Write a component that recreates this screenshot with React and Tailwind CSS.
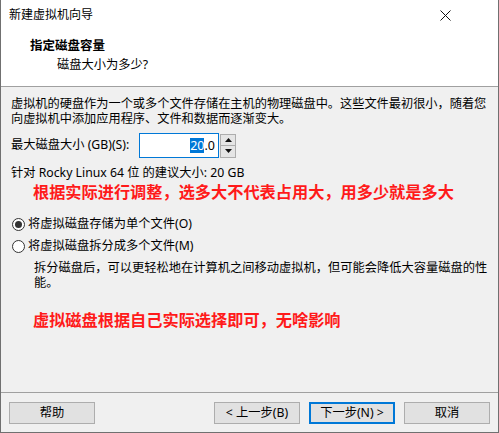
import React, { useState } from 'react';

const font = { fontFamily: '"Noto Sans", "Noto Sans CJK SC", sans-serif' };

function Radio({ checked, label, onClick }) {
  return (
    <div className="flex items-center h-[16px] cursor-default" onClick={onClick}>
      <span className="w-[13px] h-[13px] rounded-full border border-[#333] bg-white flex items-center justify-center ml-[1px] mr-[3px]">
        {checked && <span className="w-[7px] h-[7px] rounded-full bg-[#333]"></span>}
      </span>
      <span className="text-[12.25px] leading-[16px] whitespace-nowrap">{label}</span>
    </div>
  );
}

function Btn({ children, primary }) {
  return (
    <button
      className={`w-[86px] h-[22px] bg-[#e1e1e1] text-[12.25px] leading-[18px] text-black ${
        primary ? 'border-2 border-[#0078d7]' : 'border border-[#adadad]'
      }`}
    >
      {children}
    </button>
  );
}

export default function App() {
  const [split, setSplit] = useState(false);

  return (
    <div className="w-[499px] h-[433px] flex flex-col bg-[#f0f0f0] border-l border-r border-b border-[#707070] text-black overflow-hidden" style={font}>
      {/* 标题栏 */}
      <div className="h-[30px] bg-white flex items-center justify-between pl-[8px] pr-[47px]">
        <span className="text-[12px] leading-[16px]">新建虚拟机向导</span>
        <svg width="11" height="11" viewBox="0 0 11 11">
          <path d="M0.5 0.5 L10.5 10.5 M10.5 0.5 L0.5 10.5" stroke="#111" strokeWidth="1" />
        </svg>
      </div>

      {/* 页头 */}
      <div className="h-[57px] bg-white border-b border-[#a0a0a0] pl-[29px] pt-[8px]">
        <div className="text-[12.5px] font-bold leading-[16px]">指定磁盘容量</div>
        <div className="text-[12.25px] leading-[16px] ml-[27px] mt-[3px]">磁盘大小为多少?</div>
      </div>

      {/* 主体 */}
      <div className="flex-1 flex flex-col px-[10px] pt-[9px]">
        <div className="text-[12.2px] leading-[15px] whitespace-nowrap">
          <div>虚拟机的硬盘作为一个或多个文件存储在主机的物理磁盘中。这些文件最初很小，随着您</div>
          <div>向虚拟机中添加应用程序、文件和数据而逐渐变大。</div>
        </div>

        <div className="flex items-center mt-[7px] h-[25px]">
          <span className="text-[12.25px] w-[128px] whitespace-nowrap">最大磁盘大小 (GB)(S):</span>
          <div className="w-[80px] h-[25px] bg-white border border-[#0078d7] flex items-center justify-end pr-[3px] text-[12.5px]">
            <span className="bg-[#0078d7] text-white leading-[15px]">20</span>
            <span className="leading-[15px]">.0</span>
          </div>
          <div className="w-[16px] h-[24px] flex flex-col border border-[#adadad] bg-[#f0f0f0] ml-[1px]">
            <div className="flex-1 flex items-center justify-center border-b border-[#adadad] bg-[#e5e5e5]">
              <svg width="7" height="4" viewBox="0 0 7 4"><path d="M3.5 0 L7 4 L0 4 Z" fill="#111" /></svg>
            </div>
            <div className="flex-1 flex items-center justify-center bg-[#e5e5e5]">
              <svg width="7" height="4" viewBox="0 0 7 4"><path d="M0 0 L7 0 L3.5 4 Z" fill="#111" /></svg>
            </div>
          </div>
        </div>

        <div className="text-[12.25px] leading-[15px] mt-[7px] whitespace-nowrap">针对 Rocky Linux 64 位 的建议大小: 20 GB</div>

        <div className="text-[16.2px] leading-[20px] font-bold text-[#ff1a1a] mt-[2px] ml-[22px] whitespace-nowrap">
          根据实际进行调整，选多大不代表占用大，用多少就是多大
        </div>

        <div className="mt-[14px]">
          <Radio checked={!split} label="将虚拟磁盘存储为单个文件(O)" onClick={() => setSplit(false)} />
        </div>
        <div className="mt-[6px]">
          <Radio checked={split} label="将虚拟磁盘拆分成多个文件(M)" onClick={() => setSplit(true)} />
        </div>

        <div className="text-[12.25px] leading-[15px] ml-[23px] mt-[6px] whitespace-nowrap">
          <div>拆分磁盘后，可以更轻松地在计算机之间移动虚拟机，但可能会降低大容量磁盘的性</div>
          <div>能。</div>
        </div>

        <div className="text-[16.2px] leading-[20px] font-bold text-[#ff1a1a] mt-[20px] ml-[22px] whitespace-nowrap">
          虚拟磁盘根据自己实际选择即可，无啥影响
        </div>
      </div>

      {/* 底部按钮 */}
      <div className="border-t border-[#a0a0a0] h-[40px] flex items-start pt-[9px] px-[8px]">
        <Btn>帮助</Btn>
        <div className="flex-1"></div>
        <div className="flex gap-[9px]">
          <Btn>&lt; 上一步(B)</Btn>
          <Btn primary>下一步(N) &gt;</Btn>
          <Btn>取消</Btn>
        </div>
      </div>
    </div>
  );
}
